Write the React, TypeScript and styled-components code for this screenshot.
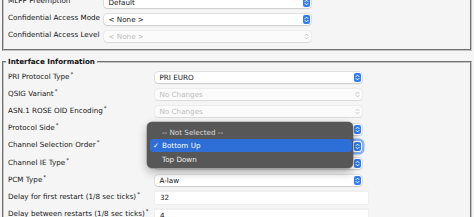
import React from 'react';
import styled, { createGlobalStyle } from 'styled-components';

const GlobalStyle = createGlobalStyle`
  html, body {
    margin: 0;
    padding: 0;
    background: #f5f5f5;
    overflow: hidden;
  }
  body {
    font-family: "DejaVu Sans", Verdana, sans-serif;
    font-size: 7.2px;
    color: #161616;
  }
`;

const Page = styled.div`
  padding: 0 2px;
  margin-top: -10px;
`;

const Section = styled.fieldset<{ $gap?: number }>`
  margin: ${(p) => p.$gap ?? 0}px 0 0 0;
  padding: 2px 4px 4px 4px;
  border: 2px groove #c4c4c4;
  min-width: 0;
`;

const Legend = styled.legend`
  padding: 0 2px;
  margin-left: -2px;
  font-weight: bold;
  line-height: 10px;
  color: #111111;
`;

const Rows = styled.div<{ $labelWidth: number; $rowHeight: number }>`
  display: grid;
  grid-template-columns: ${(p) => p.$labelWidth}px 1fr;
  grid-auto-rows: ${(p) => p.$rowHeight}px;
  align-items: center;
`;

const Label = styled.div`
  padding-bottom: 4px;
  white-space: nowrap;
`;

const Req = styled.span`
  font-size: 5.5px;
  vertical-align: 3px;
  margin-left: 1px;
`;

const Field = styled.div`
  position: relative;
  display: flex;
  align-items: center;
`;

const SelectBox = styled.div<{ $disabled?: boolean; $focused?: boolean }>`
  width: 207px;
  height: 11px;
  box-sizing: border-box;
  display: flex;
  align-items: center;
  padding-left: 4.5px;
  border-radius: 3px;
  background: ${(p) => (p.$disabled ? '#fbfbfb' : '#ffffff')};
  color: ${(p) => (p.$disabled ? '#bcbcbc' : '#161616')};
  box-shadow: ${(p) =>
    p.$focused
      ? '0 0 0 2.5px rgba(64, 132, 236, 0.6)'
      : p.$disabled
        ? '0 0 0 0.5px rgba(0,0,0,0.06), 0 0.5px 1px rgba(0,0,0,0.08)'
        : '0 0 0 0.5px rgba(0,0,0,0.12), 0 0.5px 1.5px rgba(0,0,0,0.18)'};
`;

const SelectText = styled.span`
  flex: 1;
  white-space: nowrap;
`;

const ArrowBadge = styled.span<{ $disabled?: boolean }>`
  width: 7px;
  height: 9px;
  margin-right: 1px;
  border-radius: 2px;
  background: ${(p) => (p.$disabled ? 'transparent' : '#2f7cf4')};
  display: flex;
  align-items: center;
  justify-content: center;
  color: ${(p) => (p.$disabled ? '#c6c6c6' : '#ffffff')};
`;

const TextInput = styled.div`
  width: 213px;
  height: 13px;
  box-sizing: border-box;
  display: flex;
  align-items: center;
  padding-left: 5px;
  background: #ffffff;
  box-shadow: inset 0 0.5px 0 rgba(0,0,0,0.12), 0 0 0 0.5px rgba(0,0,0,0.05);
  color: #161616;
`;

const Menu = styled.div`
  position: absolute;
  top: -18.5px;
  left: -8px;
  width: 206px;
  box-sizing: border-box;
  padding: 3px 1px 2.5px 3px;
  background: #575757;
  border-radius: 5px;
  box-shadow: 0 0 0 0.5px rgba(0,0,0,0.35), 0 4px 10px rgba(0,0,0,0.3);
  z-index: 10;
`;

const MenuItem = styled.div<{ $active?: boolean; $muted?: boolean }>`
  height: 13.5px;
  display: flex;
  align-items: center;
  border-radius: 3px;
  background: ${(p) => (p.$active ? '#2d6fd6' : 'transparent')};
  color: ${(p) => (p.$active ? '#ffffff' : p.$muted ? '#dcdcdc' : '#f0f0f0')};
`;

const Check = styled.span`
  width: 9px;
  margin-left: 3px;
  font-size: 7px;
`;

const Chevrons = ({ color }: { color?: string }) => (
  <svg width="7" height="9" viewBox="0 0 7 9">
    <path
      d="M2 3.6 L3.5 2.1 L5 3.6 M2 5.4 L3.5 6.9 L5 5.4"
      fill="none"
      stroke={color ?? 'currentColor'}
      strokeWidth="1"
      strokeLinecap="round"
      strokeLinejoin="round"
    />
  </svg>
);

type SelectProps = {
  value?: string;
  disabled?: boolean;
  focused?: boolean;
};

const Select: React.FC<SelectProps> = ({ value, disabled, focused }) => (
  <SelectBox $disabled={disabled} $focused={focused}>
    <SelectText>{value}</SelectText>
    <ArrowBadge $disabled={disabled}>
      <Chevrons />
    </ArrowBadge>
  </SelectBox>
);

const DropdownMenu = () => (
  <Menu>
    <MenuItem $muted>
      <Check />
      -- Not Selected --
    </MenuItem>
    <MenuItem $active>
      <Check>✓</Check>
      Bottom Up
    </MenuItem>
    <MenuItem>
      <Check />
      Top Down
    </MenuItem>
  </Menu>
);

const App: React.FC = () => {
  return (
    <>
      <GlobalStyle />
      <Page>
        <Section>
          <Rows $labelWidth={96} $rowHeight={17}>
            <Label>MLPP Preemption</Label>
            <Field>
              <Select value="Default" />
            </Field>
            <Label>Confidential Access Mode</Label>
            <Field>
              <Select value="< None >" />
            </Field>
            <Label>Confidential Access Level</Label>
            <Field>
              <Select value="< None >" disabled />
            </Field>
          </Rows>
        </Section>

        <Section $gap={6}>
          <Legend>Interface Information</Legend>
          <Rows $labelWidth={147} $rowHeight={17.2}>
            <Label>
              PRI Protocol Type<Req>*</Req>
            </Label>
            <Field>
              <Select value="PRI EURO" />
            </Field>
            <Label>
              QSIG Variant<Req>*</Req>
            </Label>
            <Field>
              <Select value="No Changes" disabled />
            </Field>
            <Label>
              ASN.1 ROSE OID Encoding<Req>*</Req>
            </Label>
            <Field>
              <Select value="No Changes" disabled />
            </Field>
            <Label>
              Protocol Side<Req>*</Req>
            </Label>
            <Field>
              <Select />
            </Field>
            <Label>
              Channel Selection Order<Req>*</Req>
            </Label>
            <Field>
              <Select focused />
              <DropdownMenu />
            </Field>
            <Label>
              Channel IE Type<Req>*</Req>
            </Label>
            <Field>
              <Select />
            </Field>
            <Label>
              PCM Type<Req>*</Req>
            </Label>
            <Field>
              <Select value="A-law" />
            </Field>
            <Label>
              Delay for first restart (1/8 sec ticks)<Req>*</Req>
            </Label>
            <Field>
              <TextInput>32</TextInput>
            </Field>
            <Label>
              Delay between restarts (1/8 sec ticks)<Req>*</Req>
            </Label>
            <Field>
              <TextInput>4</TextInput>
            </Field>
          </Rows>
        </Section>
      </Page>
    </>
  );
};

export default App;
